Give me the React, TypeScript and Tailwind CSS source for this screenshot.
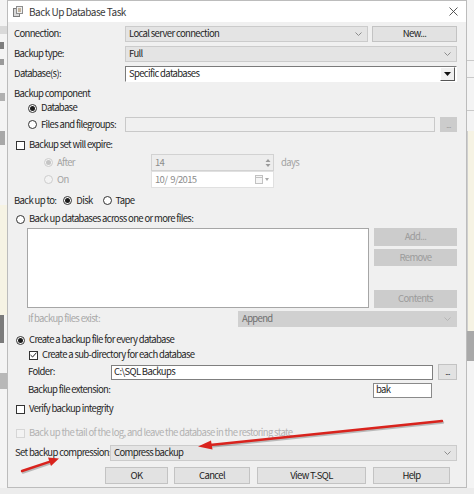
import React from "react";

const FONT = "font-['Noto_Sans_CJK_JP','Liberation_Sans',sans-serif]";

function Chevron({ color = "#8c8c8c" }: { color?: string }) {
  return (
    <svg width="7" height="4" viewBox="0 0 7 4" className="shrink-0">
      <path d="M0.5 0.5 L3.5 3.5 L6.5 0.5" fill="none" stroke={color} strokeWidth="1" />
    </svg>
  );
}

function Radio({ on, dim }: { on?: boolean; dim?: boolean }) {
  return (
    <span
      className={`flex h-[9px] w-[9px] shrink-0 items-center justify-center rounded-full border ${
        dim ? "border-[#cdcdcd] bg-[#f3f3f3]" : "border-[#333] bg-white"
      }`}
    >
      {on && <span className={`h-[5px] w-[5px] rounded-full ${dim ? "bg-[#c4c4c4]" : "bg-[#1c1c1c]"}`} />}
    </span>
  );
}

function Check({ on, dim }: { on?: boolean; dim?: boolean }) {
  return (
    <span
      className={`flex h-[9px] w-[9px] shrink-0 items-center justify-center border ${
        dim ? "border-[#d6d6d6] bg-[#f3f3f3]" : "border-[#333] bg-white"
      }`}
    >
      {on && (
        <svg width="7" height="6" viewBox="0 0 7 6">
          <path d="M0.5 3 L2.6 5 L6.5 0.6" fill="none" stroke="#222" strokeWidth="1" />
        </svg>
      )}
    </span>
  );
}

function Btn({ children, className = "", dim }: { children: React.ReactNode; className?: string; dim?: boolean }) {
  return (
    <div
      className={`flex items-center justify-center border ${
        dim ? "border-[#cccccc] bg-[#cccccc] text-[#9b9b9b]" : "border-[#c3c3c3] bg-[#e2e2e2] text-[#222]"
      } ${className}`}
    >
      {children}
    </div>
  );
}

// strips of the window that sits behind the dialog
function LeftStrip() {
  return (
    <div className="flex w-[7px] flex-col bg-[#f4f4f4]">
      <div className="h-[26px]" />
      <div className="h-[8px] bg-[#d9d9d9]" />
      <div className="mt-[8px] h-[7px] w-[4px] bg-[#7d7d7d]" />
      <div className="mt-[10px] h-[6px] w-[4px] bg-[#9a9a9a]" />
      <div className="mt-[28px] h-[8px] w-[5px] bg-[#b0b0b0]" />
      <div className="mt-[30px] h-[14px] w-[5px] bg-[#a8a8a8]" />
      <div className="mt-[60px] h-[110px] bg-[#f6f3e4]" />
      <div className="h-[28px] w-[4px] bg-[#7b7b7b]" />
      <div className="mt-[30px] h-[16px] bg-[#b8b8b8]" />
      <div className="flex-1" />
    </div>
  );
}

function RightStrip() {
  return (
    <div className="flex flex-1 flex-col bg-[#f4f4f4]">
      <div className="h-[60px]" />
      <div className="h-px bg-[#c9c9c9]" />
      <div className="mt-[16px] h-px bg-[#c9c9c9]" />
      <div className="mt-[32px] h-px bg-[#c9c9c9]" />
      <div className="mt-[20px] h-[200px] border-l border-[#cfcfcf] bg-[#f6f3e4]" />
      <div className="h-[30px] bg-[#a9a9a9]" />
      <div className="flex-1" />
    </div>
  );
}

export default function App() {
  return (
    <div
      className={`relative h-[494px] w-[474px] overflow-hidden whitespace-pre bg-[#ececec] text-[9.5px] leading-none tracking-[-0.65px] text-[#262626] ${FONT}`}
    >
      <div className="flex h-[488px]">
        <LeftStrip />

        {/* dialog window */}
        <div className="flex w-[460px] flex-col border border-[#bcbcbc] bg-[#f0f0f0]">
          <div className="flex h-[21px] shrink-0 items-center bg-white pl-[4px] pr-[6px]">
            <svg width="11" height="11" viewBox="0 0 11 11" className="mr-[6px]">
              <rect x="1.5" y="2.5" width="6" height="8" fill="#d8d8d8" stroke="#7b7b7b" />
              <rect x="4.5" y="0.5" width="6" height="7" fill="#efefef" stroke="#8d8d8d" />
              <path d="M6 3 H9 M6 5 H9" stroke="#9a7b4f" />
            </svg>
            <span className="text-[10px] tracking-[-0.5px] text-[#3a3a3a]">Back Up Database Task</span>
            <svg width="9" height="9" viewBox="0 0 9 9" className="ml-auto mr-[2px]">
              <path d="M0.5 0.5 L8.5 8.5 M8.5 0.5 L0.5 8.5" stroke="#444" strokeWidth="0.9" />
            </svg>
          </div>

          <div className="flex flex-col pl-[6px] pr-[9px]">
            <div className="mt-[4px] flex h-[16px] items-center">
              <span className="w-[111px]">Connection:</span>
              <div className="flex h-full w-[243px] items-center justify-between border border-[#cbcbcb] bg-[#e4e4e4] pl-[3px] pr-[5px]">
                <span>Local server connection</span>
                <Chevron />
              </div>
              <Btn className="ml-[4px] h-full flex-1">New...</Btn>
            </div>

            <div className="mt-[4px] flex h-[16px] items-center">
              <span className="w-[111px]">Backup type:</span>
              <div className="flex h-full flex-1 items-center justify-between border border-[#cbcbcb] bg-[#e4e4e4] pl-[3px] pr-[5px]">
                <span>Full</span>
                <Chevron />
              </div>
            </div>

            <div className="mt-[4px] flex h-[16px] items-center">
              <span className="w-[111px]">Database(s):</span>
              <div className="flex h-full flex-1 items-center justify-between border border-b-white border-l-[#7a7a7a] border-r-white border-t-[#7a7a7a] bg-white pl-[3px] pr-px">
                <span>Specific databases</span>
                <div className="flex h-[14px] w-[15px] items-center justify-center border border-b-[#555] border-l-white border-r-[#555] border-t-white bg-[#f0f0f0]">
                  <svg width="7" height="4" viewBox="0 0 7 4">
                    <path d="M0 0 H7 L3.5 4 Z" fill="#111" />
                  </svg>
                </div>
              </div>
            </div>

            <div className="mt-[5px] flex h-[14px] items-center">Backup component</div>

            <div className="flex h-[14px] items-center pl-[14px]">
              <Radio on />
              <span className="ml-[4px]">Database</span>
            </div>

            <div className="mt-[2px] flex h-[15px] items-center">
              <div className="flex w-[111px] items-center pl-[14px]">
                <Radio />
                <span className="ml-[4px]">Files and filegroups:</span>
              </div>
              <div className="h-full w-[310px] border border-[#c9c9c9] bg-[#f0f0f0]" />
              <Btn dim className="ml-auto h-full w-[17px] text-[8px]">...</Btn>
            </div>

            <div className="mt-[6px] flex h-[14px] items-center pl-[2px]">
              <Check />
              <span className="ml-[4px]">Backup set will expire:</span>
            </div>

            <div className="mt-[2px] flex h-[17px] items-center text-[#a3a3a3]">
              <div className="flex w-[137px] items-center pl-[30px]">
                <Radio on dim />
                <span className="ml-[4px]">After</span>
              </div>
              <div className="flex h-full w-[123px] items-center justify-between border border-[#d2d2d2] bg-[#ededed] pl-[3px] pr-[2px] text-[#8c8c8c]">
                <span>14</span>
                <svg width="6" height="10" viewBox="0 0 6 10">
                  <path d="M0.5 4 L3 1 L5.5 4 Z M0.5 6 L3 9 L5.5 6 Z" fill="#9a9a9a" />
                </svg>
              </div>
              <span className="ml-[7px]">days</span>
            </div>

            <div className="flex h-[17px] items-center text-[#a3a3a3]">
              <div className="flex w-[137px] items-center pl-[30px]">
                <Radio dim />
                <span className="ml-[4px]">On</span>
              </div>
              <div className="flex h-full w-[123px] items-center justify-between border border-[#e0e0e0] bg-white pl-[3px] pr-[4px] text-[#8c8c8c]">
                <span>10/  9/2015</span>
                <div className="flex items-center gap-[2px]">
                  <svg width="8" height="9" viewBox="0 0 8 9">
                    <rect x="0.5" y="0.5" width="7" height="8" fill="#f6f6f6" stroke="#c2c2c2" />
                    <path d="M0.5 2.5 H7.5" stroke="#c2c2c2" />
                  </svg>
                  <svg width="4" height="3" viewBox="0 0 4 3">
                    <path d="M0 0 H4 L2 3 Z" fill="#a8a8a8" />
                  </svg>
                </div>
              </div>
            </div>

            <div className="mt-[5px] flex h-[15px] items-center">
              <span>Back up to:</span>
              <span className="ml-[7px]"><Radio on /></span>
              <span className="ml-[4px]">Disk</span>
              <span className="ml-[10px]"><Radio /></span>
              <span className="ml-[4px]">Tape</span>
            </div>

            <div className="mt-[4px] flex h-[14px] items-center pl-[2px]">
              <Radio />
              <span className="ml-[4px]">Back up databases across one or more files:</span>
            </div>

            <div className="mt-[2px] flex h-[80px]">
              <div className="ml-[13px] w-[342px] border border-[#a6a6a6] bg-white" />
              <div className="ml-[5px] flex flex-1 flex-col">
                <Btn dim className="h-[18px]">Add...</Btn>
                <Btn dim className="mt-[3px] h-[17px]">Remove</Btn>
                <Btn dim className="mt-auto h-[18px]">Contents</Btn>
              </div>
            </div>

            <div className="mt-[3px] flex h-[16px] items-center">
              <span className="pl-[14px] text-[#a8a8a8]">If backup files exist:</span>
              <div className="ml-auto flex h-full w-[219px] items-center justify-between border border-[#d0d0d0] bg-[#d0d0d0] pl-[3px] pr-[5px] text-[#6f6f6f]">
                <span>Append</span>
                <Chevron color="#b5b5b5" />
              </div>
            </div>

            <div className="mt-[6px] flex h-[14px] items-center pl-[2px]">
              <Radio on />
              <span className="ml-[4px]">Create a backup file for every database</span>
            </div>

            <div className="mt-px flex h-[14px] items-center pl-[15px]">
              <Check on />
              <span className="ml-[4px]">Create a sub-directory for each database</span>
            </div>

            <div className="mt-[2px] flex h-[16px] items-center">
              <span className="w-[97px] pl-[14px]">Folder:</span>
              <div className="flex h-[15px] w-[322px] items-center border border-[#7f7f7f] bg-white pl-[2px]">C:\SQL Backups</div>
              <Btn className="ml-auto h-[16px] w-[19px] text-[8px]">...</Btn>
            </div>

            <div className="mt-[2px] flex h-[16px] items-center">
              <span className="pl-[14px]">Backup file extension:</span>
              <div className="ml-auto mr-[25px] flex h-[15px] w-[59px] items-center border border-[#8a8a8a] bg-white pl-[2px]">bak</div>
            </div>

            <div className="mt-[4px] flex h-[14px] items-center pl-[2px]">
              <Check />
              <span className="ml-[4px]">Verify backup integrity</span>
            </div>

            <div className="mt-[10px] flex h-[14px] items-center pl-[2px] text-[#b2b2b2]">
              <Check dim />
              <span className="ml-[4px]">Back up the tail of the log, and leave the database in the restoring state</span>
            </div>

            <div className="mt-[5px] flex h-[16px] items-center">
              <span className="w-[96px] pl-px">Set backup compression:</span>
              <div className="flex h-full flex-1 items-center justify-between border border-[#cbcbcb] bg-[#e4e4e4] pl-[3px] pr-[5px]">
                <span>Compress backup</span>
                <Chevron />
              </div>
            </div>

            <div className="mt-[6px] flex h-[17px]">
              <Btn className="ml-[91px] w-[63px]">OK</Btn>
              <Btn className="ml-[6px] w-[76px]">Cancel</Btn>
              <Btn className="ml-[7px] w-[109px]">View T-SQL</Btn>
              <Btn className="ml-[7px] w-[77px]">Help</Btn>
            </div>
          </div>
        </div>

        <RightStrip />
      </div>

      {/* red annotation arrows */}
      <svg className="pointer-events-none absolute left-0 top-0" width="474" height="494" viewBox="0 0 474 494">
        <g opacity="0.35" transform="translate(1 1.5)">
          <path d="M442 421 L210 445" stroke="#555" strokeWidth="2.4" strokeLinecap="round" />
          <path d="M22 471 L50 461.6" stroke="#555" strokeWidth="2.4" strokeLinecap="round" />
        </g>
        <path d="M442 421 L210 445" stroke="#d9231d" strokeWidth="2.4" strokeLinecap="round" />
        <path d="M198 446.5 L211 440.5 L212.5 449.5 Z" fill="#d9231d" />
        <path d="M22 471 L50 461.6" stroke="#d9231d" strokeWidth="2.4" strokeLinecap="round" />
        <path d="M59 458.5 L48 457.5 L51 466 Z" fill="#d9231d" />
      </svg>
    </div>
  );
}
